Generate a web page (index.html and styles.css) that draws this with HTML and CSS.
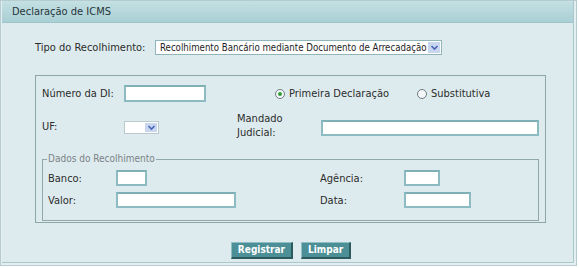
FILE: index.html
```html
<!DOCTYPE html>
<html lang="pt">
<head>
<meta charset="utf-8">
<title>Declaração de ICMS</title>
<link rel="stylesheet" href="styles.css">
</head>
<body>
<div class="panel">
  <div class="panel-inner">
    <div class="panel-header">Declaração de ICMS</div>
    <div class="panel-body">
      <div class="tipo-row">
        <span class="tipo-label">Tipo do Recolhimento:</span>
        <span class="select select-wide">
          <span class="select-text">Recolhimento Bancário mediante Documento de Arrecadação</span>
          <span class="select-arrow"><svg width="9" height="7" viewBox="0 0 9 7"><path d="M1.5 2 L4.5 5 L7.5 2" fill="none" stroke="#4a64b8" stroke-width="1.6"/></svg></span>
        </span>
      </div>

      <div class="box">
        <div class="row row-di">
          <span class="lbl lbl-main">Número da DI:</span>
          <span class="input input-di"></span>
          <span class="radio-group">
            <span class="radio checked"><span class="dot"></span></span>
            <span class="radio-text">Primeira Declaração</span>
          </span>
          <span class="radio-group radio-group-2">
            <span class="radio"></span>
            <span class="radio-text">Substitutiva</span>
          </span>
        </div>

        <div class="row row-uf">
          <span class="lbl lbl-main">UF:</span>
          <span class="select select-uf">
            <span class="select-text"></span>
            <span class="select-arrow"><svg width="9" height="7" viewBox="0 0 9 7"><path d="M1.5 2 L4.5 5 L7.5 2" fill="none" stroke="#4a64b8" stroke-width="1.6"/></svg></span>
          </span>
          <span class="lbl lbl-mandado">Mandado<br>Judicial:</span>
          <span class="input input-mandado"></span>
        </div>

        <div class="fieldset">
          <div class="legend">Dados do Recolhimento</div>
          <div class="fs-grid">
            <span class="lbl">Banco:</span>
            <span class="cell"><span class="input input-banco"></span></span>
            <span class="lbl">Agência:</span>
            <span class="cell"><span class="input input-agencia"></span></span>
            <span class="lbl">Valor:</span>
            <span class="cell"><span class="input input-valor"></span></span>
            <span class="lbl">Data:</span>
            <span class="cell"><span class="input input-data"></span></span>
          </div>
        </div>
      </div>

      <div class="actions">
        <span class="btn">Registrar</span>
        <span class="btn">Limpar</span>
      </div>
    </div>
  </div>
</div>
</body>
</html>
```

FILE: styles.css
```css
html, body {
  margin: 0;
  padding: 0;
  background: #ffffff;
}

body {
  font-family: "DejaVu Sans Condensed", "DejaVu Sans", sans-serif;
  font-size: 11px;
  color: #2b2b2b;
}

.panel {
  width: 577px;
  height: 266px;
  border: 1px solid #b7ccd0;
  box-sizing: border-box;
  background: #e4eff2;
  padding: 0 2px 2px 0;
}

.panel-inner {
  height: 100%;
  box-sizing: border-box;
  border-right: 1px solid #a9c7cc;
  border-bottom: 1px solid #a9c7cc;
  background: #deebee;
  margin-left: 1px;
}

.panel-header {
  height: 22px;
  box-sizing: border-box;
  padding: 4px 0 0 10px;
  background: linear-gradient(#c4e0e3, #a9cfd4);
  border-bottom: 1px solid #9fc4c9;
  color: #26353a;
  font-size: 11px;
}

.panel-body {
  padding: 17px 0 0 33px;
}

.tipo-row {
  display: flex;
  align-items: center;
  height: 15px;
}

.tipo-label {
  width: 120px;
}

.select {
  display: inline-flex;
  align-items: stretch;
  background: #ffffff;
  border: 1px solid #8fb4b9;
  box-sizing: border-box;
}

.select-wide {
  width: 287px;
  height: 15px;
}

.select-text {
  flex: 1;
  font-size: 9.6px;
  line-height: 13px;
  padding-left: 4px;
  color: #1e1e1e;
  white-space: nowrap;
  overflow: hidden;
}

.select-arrow {
  width: 12px;
  margin: 1px;
  background: #c8d6ef;
  display: flex;
  align-items: center;
  justify-content: center;
}

.box {
  margin-top: 20px;
  width: 511px;
  height: 148px;
  box-sizing: border-box;
  border: 1px solid #8ea5aa;
  padding: 9px 0 0 6px;
}

.row {
  display: flex;
  align-items: center;
}

.row-di {
  height: 17px;
}

.lbl-main {
  width: 82px;
}

.input {
  display: block;
  height: 17px;
  box-sizing: border-box;
  background: #ffffff;
  border: 2px solid #8cbcc2;
  border-top-color: #7fb0b6;
}

.input-di { width: 82px; }

.radio-group {
  display: flex;
  align-items: center;
  margin-left: 69px;
}

.radio-group-2 {
  margin-left: 28px;
}

.radio {
  width: 10px;
  height: 10px;
  box-sizing: border-box;
  border: 1px solid #6f7c82;
  border-radius: 50%;
  background: #f4f7f8;
  display: flex;
  align-items: center;
  justify-content: center;
  margin-right: 4px;
}

.dot {
  width: 4px;
  height: 4px;
  border-radius: 50%;
  background: #2f9e3a;
}

.row-uf {
  margin-top: 10px;
  height: 28px;
}

.select-uf {
  width: 35px;
  height: 13px;
  margin-top: 2px;
  border-color: #b9c9cc;
}

.lbl-mandado {
  margin-left: 78px;
  width: 84px;
  line-height: 14px;
}

.input-mandado {
  width: 218px;
  height: 16px;
  margin-top: 3px;
}

.fieldset {
  position: relative;
  margin-top: 19px;
  width: 497px;
  height: 62px;
  box-sizing: border-box;
  border: 1px solid #90a7ac;
  padding: 10px 0 0 5px;
}

.legend {
  position: absolute;
  top: -7px;
  left: 4px;
  padding: 0 1px;
  background: #deebee;
  font-size: 10px;
  color: #7a8286;
  line-height: 12px;
}

.fs-grid {
  display: grid;
  grid-template-columns: 68px 204px 84px auto;
  grid-auto-rows: 16px;
  row-gap: 6px;
  align-items: center;
}

.cell {
  display: flex;
}

.input-banco { width: 31px; height: 16px; }
.input-agencia { width: 36px; height: 16px; }
.input-valor { width: 120px; height: 16px; }
.input-data { width: 67px; height: 16px; }

.actions {
  display: flex;
  justify-content: center;
  gap: 8px;
  margin-top: 19px;
  padding-right: 26px;
}

.btn {
  display: inline-block;
  height: 17px;
  box-sizing: border-box;
  padding: 0 6px;
  line-height: 14px;
  background: #4d8f96;
  color: #ffffff;
  font-weight: bold;
  font-size: 10px;
  border: 1px solid #4d8f96;
  border-top-color: #8fbfc4;
  border-left-color: #8fbfc4;
  border-right: 2px solid #2c5a5f;
  border-bottom: 2px solid #2c5a5f;
}
```
